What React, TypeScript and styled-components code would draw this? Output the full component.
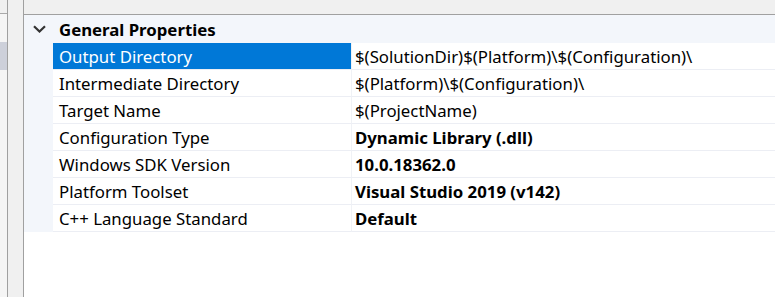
import React from 'react';
import styled, { createGlobalStyle } from 'styled-components';

const GlobalStyle = createGlobalStyle`
  html, body {
    margin: 0;
    padding: 0;
    background: #ffffff;
  }
  body {
    font-family: "Noto Sans", "Open Sans", Arial, sans-serif;
  }
`;

const Frame = styled.div`
  display: flex;
  width: 775px;
  height: 297px;
  overflow: hidden;
  background: #f0f0f0;
`;

const TreePane = styled.div`
  width: 7px;
  border-right: 1px solid #a0a0a0;
  display: flex;
  flex-direction: column;
`;

const TreeList = styled.div`
  margin-top: 13px;
  flex: 1;
  border-top: 1px solid #a9a9a9;
  background: #f5f5f5;
  padding-top: 28px;
`;

const TreeSelected = styled.div`
  height: 28px;
  background: #cdd0da;
`;

const Splitter = styled.div`
  width: 15px;
  border-right: 1px solid #a0a0a0;
  background: #f0f0f0;
`;

const Main = styled.div`
  flex: 1;
  display: flex;
  flex-direction: column;
`;

const TopGap = styled.div`
  height: 14px;
  border-bottom: 1px solid #a0a0a0;
  background: #f0f0f0;
`;

const Grid = styled.div`
  flex: 1;
  background: #ffffff;
  font-size: 16.8px;
  color: #000;
`;

const CategoryRow = styled.div`
  height: 28px;
  display: flex;
  align-items: center;
  background: #f3f6fb;
`;

const Chevron = styled.div`
  width: 29px;
  display: flex;
  justify-content: center;
  align-items: center;
  padding-left: 2px;
  box-sizing: border-box;
`;

const CategoryTitle = styled.div`
  font-weight: 700;
  padding-left: 6px;
`;

const Row = styled.div`
  display: flex;
  height: 27px;
`;

const Gutter = styled.div`
  width: 29px;
  background: #f3f6fb;
`;

const NameCell = styled.div<{ $selected?: boolean }>`
  width: 299px;
  box-sizing: border-box;
  padding-left: 6px;
  display: flex;
  align-items: center;
  height: 27px;
  border-bottom: 1px solid #eceef4;
  border-right: 1px solid #f0f2f6;
  background: ${p => (p.$selected ? '#0078d7' : '#ffffff')};
  color: ${p => (p.$selected ? '#ffffff' : '#000000')};
  white-space: nowrap;
`;

const ValueCell = styled.div<{ $bold?: boolean }>`
  flex: 1;
  box-sizing: border-box;
  padding-left: 3px;
  display: flex;
  align-items: center;
  height: 27px;
  border-bottom: 1px solid #eceef4;
  font-weight: ${p => (p.$bold ? 700 : 400)};
  white-space: nowrap;
`;

const props = [
  { name: 'Output Directory', value: '$(SolutionDir)$(Platform)\\$(Configuration)\\', selected: true },
  { name: 'Intermediate Directory', value: '$(Platform)\\$(Configuration)\\' },
  { name: 'Target Name', value: '$(ProjectName)' },
  { name: 'Configuration Type', value: 'Dynamic Library (.dll)', bold: true },
  { name: 'Windows SDK Version', value: '10.0.18362.0', bold: true },
  { name: 'Platform Toolset', value: 'Visual Studio 2019 (v142)', bold: true },
  { name: 'C++ Language Standard', value: 'Default', bold: true },
];

export default function App() {
  return (
    <>
      <GlobalStyle />
      <Frame>
        <TreePane>
          <TreeList>
            <TreeSelected />
          </TreeList>
        </TreePane>
        <Splitter />
        <Main>
          <TopGap />
          <Grid>
            <CategoryRow>
              <Chevron>
                <svg width="13" height="8" viewBox="0 0 13 8">
                  <path d="M1 1.2 L6.5 6.5 L12 1.2" fill="none" stroke="#333" strokeWidth="2.2" />
                </svg>
              </Chevron>
              <CategoryTitle>General Properties</CategoryTitle>
            </CategoryRow>
            {props.map(p => (
              <Row key={p.name}>
                <Gutter />
                <NameCell $selected={p.selected}>{p.name}</NameCell>
                <ValueCell $bold={p.bold}>{p.value}</ValueCell>
              </Row>
            ))}
          </Grid>
        </Main>
      </Frame>
    </>
  );
}
